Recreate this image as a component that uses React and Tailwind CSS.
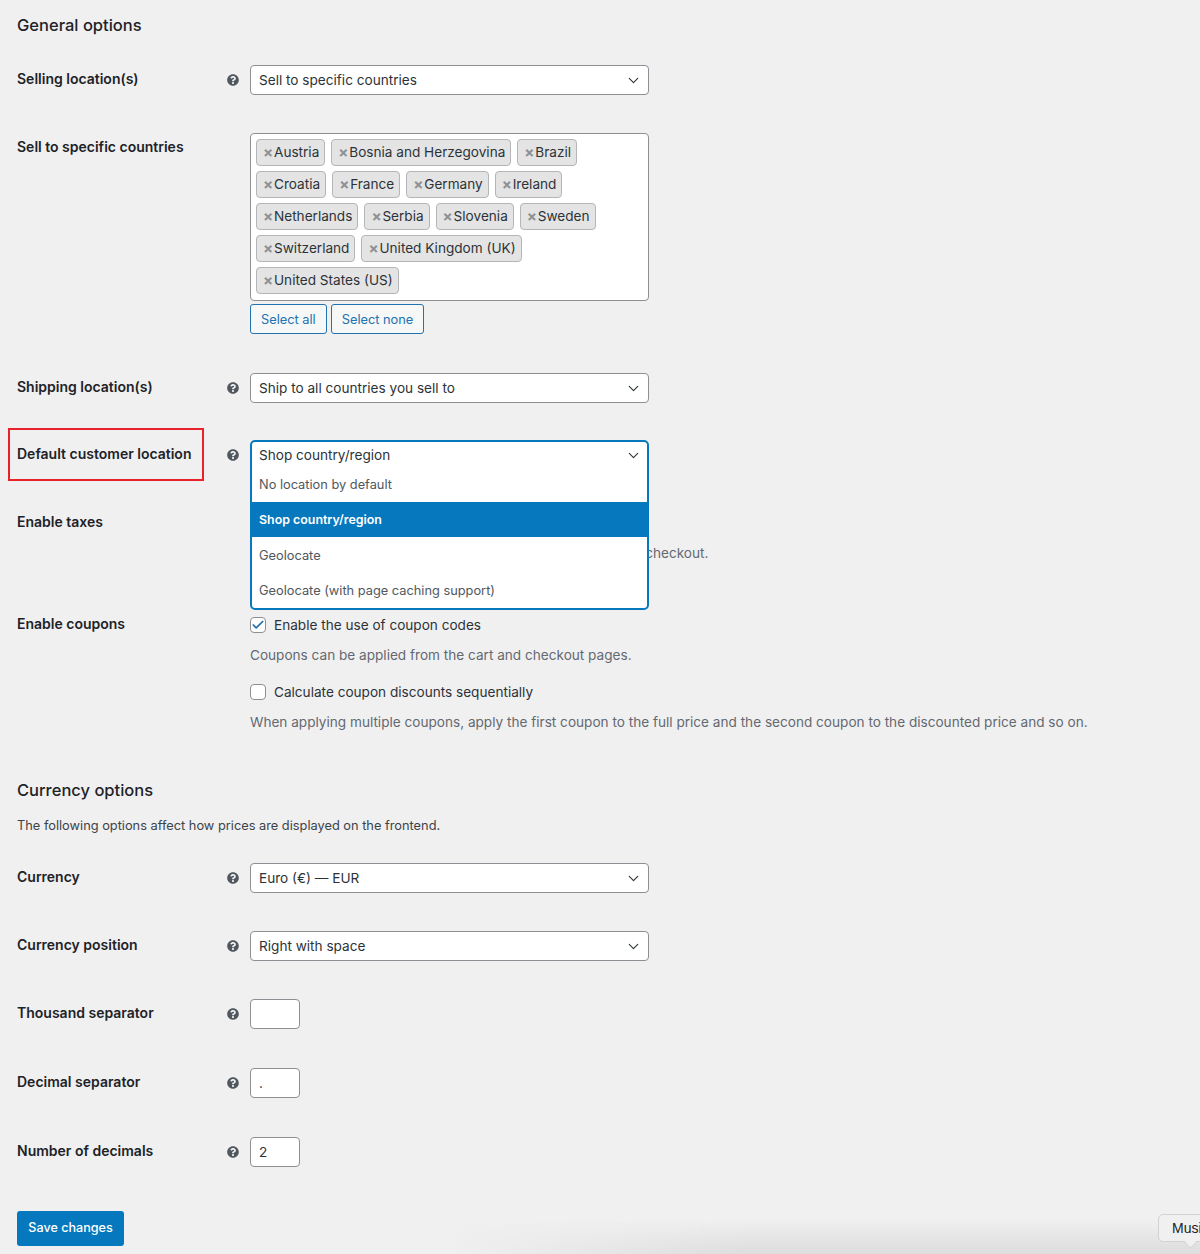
import React from "react";
import { ChevronDown, Check } from "lucide-react";
import { FaQuestionCircle } from "react-icons/fa";

const countryRows = [
  ["Austria", "Bosnia and Herzegovina", "Brazil"],
  ["Croatia", "France", "Germany", "Ireland"],
  ["Netherlands", "Serbia", "Slovenia", "Sweden"],
  ["Switzerland", "United Kingdom (UK)"],
  ["United States (US)"],
];

const Help = () => (
  <span className="w-[23px] shrink-0 pt-[9px] text-[#50575e]">
    <FaQuestionCircle size={12} />
  </span>
);

const Row = ({ label, help = true, className = "", children }) => (
  <div className={`flex ${className}`}>
    <div className="w-[210px] shrink-0 pt-1 text-sm leading-5 font-semibold text-[#1d2327]">{label}</div>
    {help ? <Help /> : <span className="w-[23px] shrink-0" />}
    <div className="relative min-w-0 flex-1">{children}</div>
  </div>
);

const Select = ({ value }) => (
  <div className="flex h-[30px] w-[399px] items-center justify-between rounded border border-[#8c8f94] bg-white pr-[6px] pl-2 text-[13.6px] text-[#2c3338]">
    <span>{value}</span>
    <ChevronDown size={17} strokeWidth={1.6} />
  </div>
);

const Tag = ({ name }) => (
  <span className="flex h-[27px] items-center gap-[3px] rounded-[4px] border border-[#b4b5b8] bg-[#e4e4e4] pr-[5px] pl-[6px] text-[13.6px] text-[#2c3338]">
    <span className="w-2 text-center text-[15px] leading-none font-bold text-[#8f9195]">×</span>
    {name}
  </span>
);

const SmallInput = ({ value }) => (
  <input
    readOnly
    value={value}
    className="h-[30px] w-[50px] rounded border border-[#8c8f94] bg-white px-2 text-[13.6px] text-[#2c3338]"
  />
);

const Checkbox = ({ checked, label }) => (
  <div className="flex h-5 items-center gap-2 text-[13.6px] text-[#2c3338]">
    <span className="flex h-4 w-4 items-center justify-center rounded border border-[#8c8f94] bg-white">
      {checked && <Check size={16} strokeWidth={3} className="text-[#2271b1]" />}
    </span>
    {label}
  </div>
);

const SmallButton = ({ children }) => (
  <button className="h-[30px] rounded-[3px] border border-[#2271b1] bg-[#f6f7f7] px-[10px] pt-px text-[12.8px] text-[#2271b1]">
    {children}
  </button>
);

const Dropdown = () => (
  <div className="absolute top-0 left-0 z-10 h-[170px] w-[399px] overflow-hidden rounded-[5px] border-2 border-[#0678be] bg-white text-[12.8px] text-[#50575e]">
    <div className="flex h-[25px] items-center justify-between pt-[2px] pr-[5px] pl-[7px] text-[13.6px] text-[#2c3338]">
      <span>Shop country/region</span>
      <ChevronDown size={17} strokeWidth={1.6} />
    </div>
    <div className="flex h-[35px] items-center pl-[7px]">No location by default</div>
    <div className="flex h-[35px] items-center bg-[#0678be] pt-px pl-[7px] text-[12.4px] font-semibold text-white">Shop country/region</div>
    <div className="flex h-[36px] items-center pt-px pl-[7px]">Geolocate</div>
    <div className="flex h-[35px] items-center pl-[7px]">Geolocate (with page caching support)</div>
  </div>
);

export default function App() {
  return (
    <div className="relative h-[1254px] overflow-hidden bg-[#f0f0f1] px-[17px] pt-[13px] font-['Inter',sans-serif] antialiased">
      <h2 className="h-6 text-[16.5px] leading-6 font-medium text-[#1d2327]">General options</h2>

      <Row label="Selling location(s)" className="mt-7">
        <Select value="Sell to specific countries" />
      </Row>

      <Row label="Sell to specific countries" help={false} className="mt-[38px]">
        <div className="h-[168px] w-[399px] rounded border border-[#8c8f94] bg-white pt-[5px] pl-[5px]">
          <div className="flex flex-col gap-[5px]">
            {countryRows.map((row) => (
              <div key={row[0]} className="flex gap-[6px]">
                {row.map((name) => (
                  <Tag key={name} name={name} />
                ))}
              </div>
            ))}
          </div>
        </div>
        <div className="mt-[3px] flex gap-1">
          <SmallButton>Select all</SmallButton>
          <SmallButton>Select none</SmallButton>
        </div>
      </Row>

      <Row label="Shipping location(s)" className="mt-[39px]">
        <Select value="Ship to all countries you sell to" />
      </Row>

      <Row label="Default customer location" className="mt-[37px] h-[30px]">
        <Dropdown />
      </Row>

      <Row label="Enable taxes" help={false} className="mt-[38px]">
        <div className="pt-[5px]">
          <Checkbox label="Enable tax rates and calculations" />
          <p className="mt-[10px] text-[13.6px] leading-5 text-[#646970]">
            Rates will be configurable and taxes will be calculated during checkout.
          </p>
        </div>
      </Row>

      <Row label="Enable coupons" help={false} className="mt-[47px]">
        <div className="pt-[5px]">
          <Checkbox checked label="Enable the use of coupon codes" />
          <p className="mt-[10px] text-[13.6px] leading-5 text-[#646970]">
            Coupons can be applied from the cart and checkout pages.
          </p>
          <div className="mt-[17px]">
            <Checkbox label="Calculate coupon discounts sequentially" />
          </div>
          <p className="mt-[10px] text-[13.6px] leading-5 text-[#646970]">
            When applying multiple coupons, apply the first coupon to the full price and the second coupon to the discounted price and so on.
          </p>
        </div>
      </Row>

      <h2 className="mt-[46px] h-6 text-[16.5px] leading-6 font-medium text-[#1d2327]">Currency options</h2>
      <p className="mt-[14px] text-[12.8px] leading-5 text-[#3c434a]">
        The following options affect how prices are displayed on the frontend.
      </p>

      <Row label="Currency" className="mt-[27px]">
        <Select value="Euro (€) — EUR" />
      </Row>
      <Row label="Currency position" className="mt-[38px]">
        <Select value="Right with space" />
      </Row>
      <Row label="Thousand separator" className="mt-[38px]">
        <SmallInput value="" />
      </Row>
      <Row label="Decimal separator" className="mt-[39px]">
        <SmallInput value="." />
      </Row>
      <Row label="Number of decimals" className="mt-[39px]">
        <SmallInput value="2" />
      </Row>

      <button className="mt-[44px] h-[35px] w-[107px] rounded-[3px] bg-[#0678be] text-[12.6px] font-medium text-white">
        Save changes
      </button>

      {/* annotation box over the label */}
      <div className="absolute top-[428px] left-2 h-[53px] w-[196px] border-2 border-[#e8222a]" />

      {/* dock shadow and tooltip at the bottom edge */}
      <div className="absolute right-0 bottom-0 left-[450px] h-[34px] bg-gradient-to-b from-transparent to-[#dcdcdc] [mask-image:linear-gradient(to_right,transparent,black_300px)]" />
      <div className="absolute top-[1214px] left-[1158px] flex h-[28px] w-[60px] items-center rounded-l-[5px] border border-[#d2d2d2] bg-[#f0f0f0] pl-[13px] font-['Liberation_Sans',sans-serif] text-sm text-[#222]">
        Music
      </div>
      <div className="absolute top-[1238px] left-[1186px] h-[9px] w-[9px] rotate-45 border-r border-b border-[#d2d2d2] bg-[#f0f0f0]" />
    </div>
  );
}
